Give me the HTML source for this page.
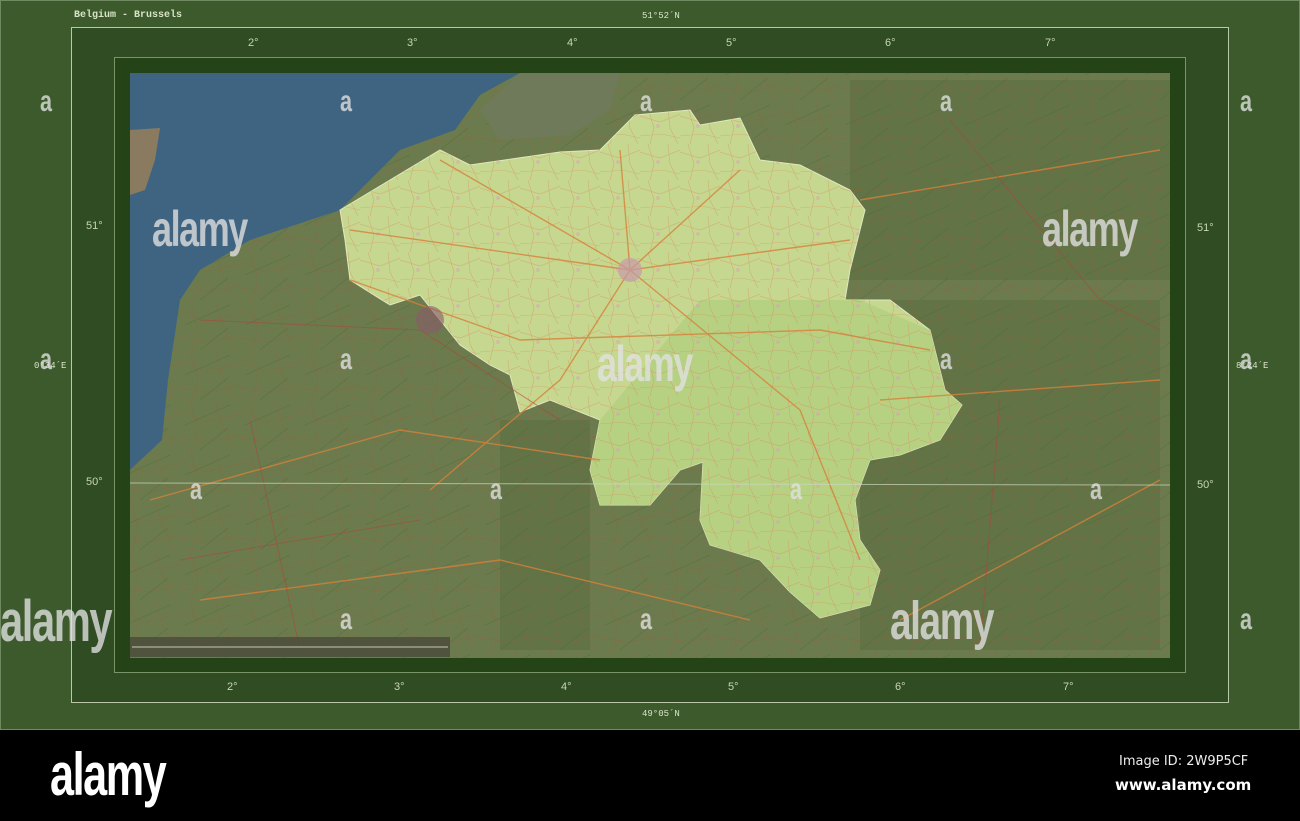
<!DOCTYPE html>
<html><head><meta charset="utf-8"><style>
*{margin:0;padding:0}
body{width:1300px;height:821px;background:#000;position:relative;overflow:hidden;font-family:"Liberation Sans",sans-serif}
.a{position:absolute}
.mono{font-family:"Liberation Mono",monospace;color:#d8e4c8;font-size:11px}
.deg{position:absolute;color:#c8d6b4;font-family:"Liberation Sans",sans-serif;font-size:11px}
.wm{position:absolute;color:rgba(225,225,225,.78);font-family:"Liberation Sans",sans-serif;font-weight:bold;letter-spacing:-2px;transform:scaleX(.72);transform-origin:left top}
</style></head><body>
<div class="a" style="left:0;top:0;width:1300px;height:730px;background:#3c5a2c;box-sizing:border-box;border:1px solid #6f8a60"></div>
<div class="a" style="left:71px;top:27px;width:1158px;height:676px;background:#2f4c22;border:1px solid #b8c8a8;box-sizing:border-box"></div>
<div class="a" style="left:114px;top:57px;width:1072px;height:616px;background:#244417;border:1px solid #7a9468;box-sizing:border-box"></div>
<svg class="a" style="left:130px;top:73px" width="1040" height="585" viewBox="130 73 1040 585">
<defs>
<pattern id="p" width="60" height="50" patternUnits="userSpaceOnUse">
<path d="M0 10 L25 22 L60 14 M10 0 L18 30 L12 50 M35 0 L42 25 L55 50 M0 38 L30 42 L60 35" stroke="#9a5a3a" stroke-width=".7" fill="none" opacity=".45"/>
<path d="M5 25 L50 5 M20 50 L48 28" stroke="#4f6a3a" stroke-width=".8" fill="none" opacity=".5"/>
</pattern>
<pattern id="q" width="40" height="36" patternUnits="userSpaceOnUse">
<path d="M0 8 L20 14 L40 6 M8 0 L14 20 L10 36 M28 0 L30 20 L38 36 M0 28 L22 26 L40 30" stroke="#d88a5a" stroke-width=".6" fill="none" opacity=".55"/>
<circle cx="18" cy="18" r="2" fill="#d9a0b0" opacity=".5"/>
</pattern>
</defs>
<rect x="130" y="73" width="1040" height="585" fill="#6c7b4d"/>
<g fill="#5e7043" opacity=".7">
<rect x="850" y="80" width="320" height="200"/><rect x="860" y="300" width="300" height="350"/><rect x="500" y="420" width="90" height="230"/></g>
<rect x="130" y="73" width="1040" height="585" fill="url(#p)"/>
<path d="M130 73 L520 73 L480 95 L455 130 L400 150 L340 210 L250 240 L200 270 L180 300 L168 380 L162 440 L130 470 Z" fill="#3f6481"/>
<path d="M130 130 L160 128 L155 160 L145 190 L130 195Z" fill="#8a7a60"/>
<path d="M520 73 L620 73 L610 110 L570 135 L500 140 L480 110Z" fill="#6f7a5a"/>
<path id="be" d="M340 210 L440 150 L470 165 L560 152 L600 150 L635 115 L690 110 L700 125 L740 118 L760 160 L800 165 L850 190 L865 210 L850 270 L845 300 L890 300 L930 330 L945 390 L962 405 L940 440 L900 455 L870 460 L855 500 L860 540 L880 570 L870 605 L820 618 L790 592 L760 560 L710 545 L700 520 L703 462 L680 470 L650 505 L600 505 L590 470 L600 420 L550 400 L520 412 L510 375 L490 365 L460 345 L440 320 L420 295 L390 305 L350 280 L345 240 Z" fill="#c6d890" stroke="#e0e8c0" stroke-width="1"/>
<path d="M700 300 L860 300 L930 330 L945 390 L962 405 L940 440 L900 455 L870 460 L855 500 L860 540 L880 570 L870 605 L820 618 L790 592 L760 560 L710 545 L700 520 L703 462 L680 470 L650 505 L600 505 L590 470 L600 420 Z" fill="#b3cf80" opacity=".8"/>
<path d="M340 210 L440 150 L470 165 L560 152 L600 150 L635 115 L690 110 L700 125 L740 118 L760 160 L800 165 L850 190 L865 210 L850 270 L845 300 L890 300 L930 330 L945 390 L962 405 L940 440 L900 455 L870 460 L855 500 L860 540 L880 570 L870 605 L820 618 L790 592 L760 560 L710 545 L700 520 L703 462 L680 470 L650 505 L600 505 L590 470 L600 420 L550 400 L520 412 L510 375 L490 365 L460 345 L440 320 L420 295 L390 305 L350 280 L345 240 Z" fill="url(#q)"/>
<g stroke="#d7813a" stroke-width="1.4" fill="none" opacity=".8">
<path d="M350 230 L630 270 L850 240"/><path d="M440 160 L630 270 L800 410 L860 560"/><path d="M620 150 L630 270 L560 380 L430 490"/><path d="M630 270 L740 170"/><path d="M350 280 L520 340 L820 330 L930 350"/><path d="M150 500 L400 430 L600 460"/><path d="M860 200 L1160 150"/><path d="M880 400 L1160 380"/><path d="M200 600 L500 560 L750 620"/><path d="M900 620 L1160 480"/></g>
<g stroke="#a54a3a" stroke-width="1" fill="none" opacity=".6">
<path d="M200 320 L420 330 L560 420"/><path d="M180 560 L420 520"/><path d="M950 120 L1100 300 L1160 330"/><path d="M250 420 L300 650"/><path d="M1000 400 L980 650"/></g>
<circle cx="630" cy="270" r="12" fill="#c89aa8" opacity=".7"/>
<circle cx="430" cy="320" r="14" fill="#8a5a6a" opacity=".6"/>
<line x1="130" y1="483" x2="1170" y2="485" stroke="#ccd8c0" stroke-width="1" opacity=".7"/>
<rect x="130" y="637" width="320" height="20" fill="#4a4a3a" opacity=".8"/>
<line x1="132" y1="647" x2="448" y2="647" stroke="#c8c8b8" stroke-width="1"/>
</svg>
<div class="a mono" style="left:74px;top:10px;font-weight:bold;font-size:10px">Belgium - Brussels</div>
<div class="a mono" style="left:642px;top:11px;font-size:9px">51°52´N</div>
<div class="a mono" style="left:642px;top:709px;font-size:9px">49°05´N</div>
<div class="a mono" style="left:34px;top:361px;font-size:9px">0°34´E</div>
<div class="a mono" style="left:1236px;top:361px;font-size:9px">8°24´E</div>
<div class="deg" style="left:248px;top:37px">2°</div><div class="deg" style="left:407px;top:37px">3°</div><div class="deg" style="left:567px;top:37px">4°</div><div class="deg" style="left:726px;top:37px">5°</div><div class="deg" style="left:885px;top:37px">6°</div><div class="deg" style="left:1045px;top:37px">7°</div>
<div class="deg" style="left:227px;top:681px">2°</div><div class="deg" style="left:394px;top:681px">3°</div><div class="deg" style="left:561px;top:681px">4°</div><div class="deg" style="left:728px;top:681px">5°</div><div class="deg" style="left:895px;top:681px">6°</div><div class="deg" style="left:1063px;top:681px">7°</div>
<div class="deg" style="left:86px;top:220px">51°</div><div class="deg" style="left:86px;top:476px">50°</div>
<div class="deg" style="left:1197px;top:222px">51°</div><div class="deg" style="left:1197px;top:479px">50°</div>
<div class="wm" style="left:152px;top:200px;font-size:50px">alamy</div>
<div class="wm" style="left:1042px;top:200px;font-size:50px">alamy</div>
<div class="wm" style="left:597px;top:335px;font-size:50px">alamy</div>
<div class="wm" style="left:0px;top:588px;font-size:58px">alamy</div>
<div class="wm" style="left:890px;top:590px;font-size:54px">alamy</div>
<div class="wm" style="left:40px;top:85px;font-size:30px">a</div><div class="wm" style="left:1240px;top:85px;font-size:30px">a</div>
<div class="wm" style="left:340px;top:85px;font-size:30px">a</div><div class="wm" style="left:640px;top:85px;font-size:30px">a</div><div class="wm" style="left:940px;top:85px;font-size:30px">a</div>
<div class="wm" style="left:40px;top:343px;font-size:30px">a</div><div class="wm" style="left:1240px;top:343px;font-size:30px">a</div>
<div class="wm" style="left:340px;top:343px;font-size:30px">a</div><div class="wm" style="left:940px;top:343px;font-size:30px">a</div>
<div class="wm" style="left:190px;top:473px;font-size:30px">a</div><div class="wm" style="left:490px;top:473px;font-size:30px">a</div><div class="wm" style="left:790px;top:473px;font-size:30px">a</div><div class="wm" style="left:1090px;top:473px;font-size:30px">a</div>
<div class="wm" style="left:340px;top:603px;font-size:30px">a</div><div class="wm" style="left:640px;top:603px;font-size:30px">a</div><div class="wm" style="left:1240px;top:603px;font-size:30px">a</div>
<div class="wm" style="left:50px;top:740px;font-size:60px;color:#fff">alamy</div>
<div class="a" style="left:1119px;top:754px;color:#eee;font-family:'DejaVu Sans',sans-serif;font-size:13px">Image ID: 2W9P5CF</div>
<div class="a" style="left:1115px;top:776px;color:#fff;font-family:'DejaVu Sans',sans-serif;font-size:15px;font-weight:bold">www.alamy.com</div>
</body></html>
